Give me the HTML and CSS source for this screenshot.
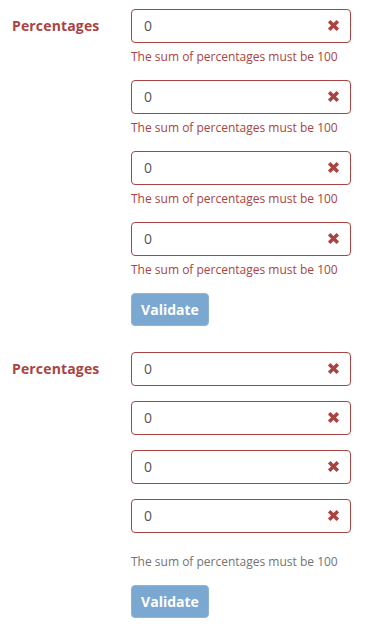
FILE: index.html
```html
<!DOCTYPE html>
<html>
<head>
<meta charset="utf-8">
<link rel="stylesheet" href="styles.css">
</head>
<body>
<form class="form">
  <div class="row">
    <label class="label">Percentages</label>
    <div class="controls">
      <div class="field"><div class="input">0</div><svg class="x" viewBox="0 0 12 12"><path d="M2 2L10 10M10 2L2 10"/></svg></div>
      <div class="help">The sum of percentages must be 100</div>
      <div class="field"><div class="input">0</div><svg class="x" viewBox="0 0 12 12"><path d="M2 2L10 10M10 2L2 10"/></svg></div>
      <div class="help">The sum of percentages must be 100</div>
      <div class="field"><div class="input">0</div><svg class="x" viewBox="0 0 12 12"><path d="M2 2L10 10M10 2L2 10"/></svg></div>
      <div class="help">The sum of percentages must be 100</div>
      <div class="field"><div class="input">0</div><svg class="x" viewBox="0 0 12 12"><path d="M2 2L10 10M10 2L2 10"/></svg></div>
      <div class="help">The sum of percentages must be 100</div>
      <button class="btn" type="button" disabled>Validate</button>
    </div>
  </div>
  <div class="row row2">
    <label class="label">Percentages</label>
    <div class="controls">
      <div class="field gap"><div class="input">0</div><svg class="x" viewBox="0 0 12 12"><path d="M2 2L10 10M10 2L2 10"/></svg></div>
      <div class="field gap"><div class="input">0</div><svg class="x" viewBox="0 0 12 12"><path d="M2 2L10 10M10 2L2 10"/></svg></div>
      <div class="field gap"><div class="input">0</div><svg class="x" viewBox="0 0 12 12"><path d="M2 2L10 10M10 2L2 10"/></svg></div>
      <div class="field"><div class="input">0</div><svg class="x" viewBox="0 0 12 12"><path d="M2 2L10 10M10 2L2 10"/></svg></div>
      <div class="help gray">The sum of percentages must be 100</div>
      <button class="btn" type="button" disabled>Validate</button>
    </div>
  </div>
</form>
</body>
</html>
```
FILE: styles.css
```css
* { box-sizing: border-box; }
body {
  margin: 0;
  background: #fff;
  font-family: "Open Sans", "Liberation Sans", sans-serif;
  font-size: 14px;
  color: #333;
}
.form { padding-top: 9px; }
.row { display: flex; }
.row2 { margin-top: 26px; }
.label {
  width: 131px;
  padding-left: 12px;
  padding-top: 7px;
  line-height: 20px;
  font-weight: 700;
  font-size: 14px;
  letter-spacing: 0.15px;
  color: #a94442;
}
.controls { width: 220px; display: flex; flex-direction: column; align-items: flex-start; }
.field { position: relative; width: 220px; }
.field.gap { margin-bottom: 15px; }
.input {
  height: 34px;
  border: 1px solid #a94442;
  border-radius: 4px;
  padding: 6px 12px;
  line-height: 20px;
  font-size: 14px;
  color: #555;
}
.x {
  position: absolute;
  right: 11px;
  top: 10px;
  width: 13px;
  height: 13px;
}
.x path { stroke: #a94442; stroke-width: 3.2; fill: none; }
.help {
  margin-top: 5px;
  margin-bottom: 15px;
  line-height: 17px;
  font-size: 12px;
  color: #a94442;
}
.help.gray { margin-top: 20px; color: #737373; }
.btn {
  height: 33px;
  width: 78px;
  padding: 0;
  border: 1px solid #8db4d8;
  border-radius: 4px;
  background: #7aa8d0;
  color: #fff;
  font-family: "Open Sans", "Liberation Sans", sans-serif;
  font-weight: 700;
  font-size: 14px;
  line-height: 20px;
}
```
